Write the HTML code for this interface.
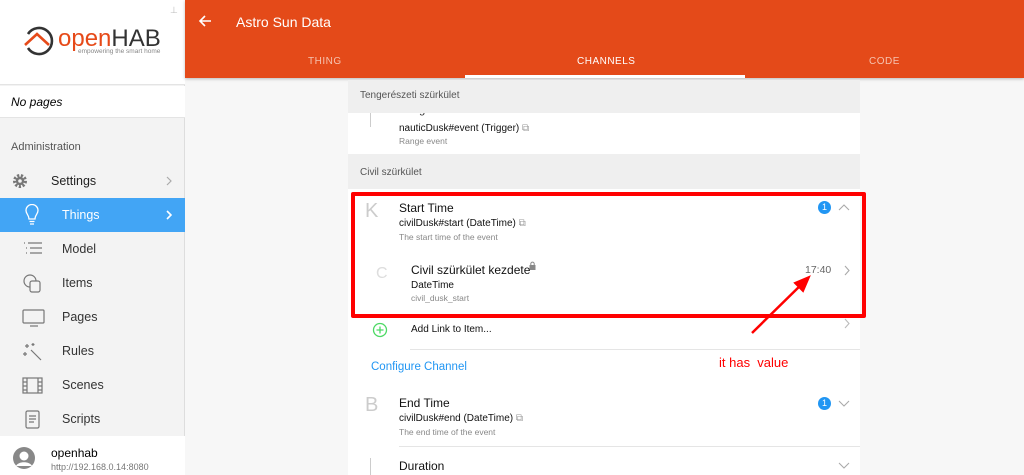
<!DOCTYPE html>
<html><head><meta charset="utf-8"><style>
*{margin:0;padding:0;box-sizing:border-box}
body{width:1024px;height:475px;overflow:hidden;position:relative;font-family:"Liberation Sans",Helvetica,Arial,sans-serif;background:#f7f7f7;color:#000}
.a{position:absolute;white-space:nowrap}
#side{position:absolute;left:0;top:0;width:185px;height:475px;background:#f3f3f3;border-right:1px solid #ddd}
.nav{position:absolute;left:0;width:185px;height:34px;font-size:12.5px;color:#333}
.nav span{position:absolute;left:62px;top:10px}
.ico{position:absolute;left:22px;top:8px}
.chev{position:absolute}
</style></head><body>
<div id="side">
 <div class="a" style="left:0;top:0;width:185px;height:85px;background:#fff;border-bottom:1px solid #e4e4e4"></div>
 <svg class="a" style="left:22px;top:26px" width="36" height="30" viewBox="0 0 36 30"><path d="M6 22 A13 13 0 1 0 6 8" fill="none" stroke="#333" stroke-width="2.6"/><path d="M3 19 L15 8 L27 19" fill="none" stroke="#e64a19" stroke-width="2.6"/></svg>
 <div class="a" style="left:58px;top:25px;font-size:24px;color:#e64a19">open<span style="color:#333">HAB</span></div>
 <div class="a" style="left:78px;top:48px;font-size:6.5px;color:#888">empowering the smart home</div>
 <div class="a" style="left:170px;top:5px;font-size:9px;color:#bbb">⊥</div>
 <div class="a" style="left:0;top:86px;width:185px;height:32px;background:#fff;border-bottom:1px solid #e4e4e4"></div>
 <div class="a" style="left:11px;top:95px;font-size:12px;font-style:italic;color:#000">No pages</div>
 <div class="a" style="left:11px;top:141px;font-size:11px;color:#555">Administration</div>
 <div class="nav" style="top:164px"><svg class="ico" style="left:12px;top:9px" width="16" height="16" viewBox="0 0 16 16"><circle cx="8" cy="8" r="5.5" fill="none" stroke="#777" stroke-width="3" stroke-dasharray="2.2 1.6"/><circle cx="8" cy="8" r="4.2" fill="#777"/><circle cx="8" cy="8" r="1.8" fill="#f3f3f3"/></svg><span style="left:51px;color:#222">Settings</span><svg class="chev" style="left:166px;top:12px" width="6" height="10"><path d="M1 1l4 4-4 4" fill="none" stroke="#aaa" stroke-width="1.2"/></svg></div>
 <div class="nav" style="top:198px;background:#42a5f5;color:#fff"><svg class="ico" style="left:25px;top:6px" width="14" height="22" viewBox="0 0 14 22"><path d="M4 15 C4 11 1 10 1 6.5 A6 6 0 0 1 13 6.5 C13 10 10 11 10 15 Z M4.5 17.5h5 M5 20h4" fill="none" stroke="#fff" stroke-width="1.3"/></svg><span style="color:#fff">Things</span><svg class="chev" style="left:166px;top:12px" width="6" height="10"><path d="M1 1l4 4-4 4" fill="none" stroke="#fff" stroke-width="1.6"/></svg></div>
 <div class="nav" style="top:232px"><svg class="ico" width="22" height="16"><path d="M2 3h1M6 3h14M4 8h1M8 8h12M4 13h1M8 13h12" stroke="#777" stroke-width="1.2"/></svg><span>Model</span></div>
 <div class="nav" style="top:266px"><svg class="ico" width="22" height="20"><circle cx="8" cy="7" r="6" fill="none" stroke="#777" stroke-width="1.2"/><rect x="8" y="7" width="10" height="11" rx="2" fill="#f3f3f3" stroke="#777" stroke-width="1.2"/></svg><span>Items</span></div>
 <div class="nav" style="top:300px"><svg class="ico" width="24" height="20"><rect x="1" y="2" width="21" height="13" rx="1" fill="none" stroke="#777" stroke-width="1.2"/><path d="M8 18h8" stroke="#777" stroke-width="1.2"/></svg><span>Pages</span></div>
 <div class="nav" style="top:334px"><svg class="ico" width="22" height="20"><path d="M9 8l10 10M5 2v4M3 4h4M11 1v3M9.5 2.5h3M3 10v4M1 12h4" stroke="#777" stroke-width="1.2"/></svg><span>Rules</span></div>
 <div class="nav" style="top:368px"><svg class="ico" width="22" height="20"><rect x="1" y="2" width="19" height="15" fill="none" stroke="#777" stroke-width="1.2"/><path d="M5 2v15M16 2v15M1 6h4M1 10h4M1 14h4M16 6h4M16 10h4M16 14h4" stroke="#777" stroke-width="1.2"/></svg><span>Scenes</span></div>
 <div class="nav" style="top:402px"><svg class="ico" style="left:25px" width="16" height="20"><rect x="1" y="1" width="13" height="17" rx="1.5" fill="none" stroke="#777" stroke-width="1.2"/><path d="M4 6h7M4 9h7M4 12h5" stroke="#777" stroke-width="1.2"/></svg><span>Scripts</span></div>
 <div class="a" style="left:0;top:436px;width:185px;height:39px;background:#fff"></div>
 <svg class="a" style="left:12px;top:446px" width="24" height="24"><circle cx="12" cy="12" r="11" fill="#888"/><circle cx="12" cy="10" r="4.5" fill="#fff"/><path d="M4 20c2-5 14-5 16 0" fill="#fff"/></svg>
 <div class="a" style="left:51px;top:446px;font-size:12px;color:#000">openhab</div>
 <div class="a" style="left:51px;top:462px;font-size:9px;color:#777">http://192.168.0.14:8080</div>
</div>
<div class="a" style="left:185px;top:0;width:839px;height:78px;background:#e44a19;box-shadow:0 1px 3px rgba(0,0,0,.25)"></div>
<svg class="a" style="left:198px;top:14px" width="14" height="14"><path d="M13 7H2M7 2L2 7l5 5" fill="none" stroke="#fff" stroke-width="1.6"/></svg>
<div class="a" style="left:236px;top:14px;font-size:14px;color:#fff">Astro Sun Data</div>
<div class="a" style="left:308px;top:56px;font-size:10px;color:#f5c3b0;letter-spacing:.5px">THING</div>
<div class="a" style="left:577px;top:56px;font-size:10px;color:#fff;letter-spacing:.5px">CHANNELS</div>
<div class="a" style="left:869px;top:56px;font-size:10px;color:#f5c3b0;letter-spacing:.5px">CODE</div>
<div class="a" style="left:465px;top:75px;width:280px;height:3px;background:#fff"></div>

<div class="a" style="left:348px;top:80px;width:512px;height:395px;background:#fff"></div>
<div class="a" style="left:348px;top:80px;width:512px;height:33px;background:#efefef"></div>
<div class="a" style="left:360px;top:90px;font-size:10px;color:#555">Tengerészeti szürkület</div>
<div class="a" style="left:370px;top:113px;width:1px;height:14px;background:#ccc"></div>
<div class="a" style="left:399px;top:104px;font-size:11px;color:#333;clip-path:inset(9px 0 0 0)">Range Event</div>
<div class="a" style="left:399px;top:123px;font-size:10px;color:#111">nauticDusk#event (Trigger) <span style="color:#999">⧉</span></div>
<div class="a" style="left:399px;top:136px;font-size:8.5px;color:#888">Range event</div>
<div class="a" style="left:348px;top:154px;width:512px;height:35px;background:#efefef"></div>
<div class="a" style="left:360px;top:167px;font-size:10px;color:#555">Civil szürkület</div>

<div class="a" style="left:365px;top:200px;font-size:20px;color:#ccc;font-weight:300">K</div>
<div class="a" style="left:399px;top:201px;font-size:12px;color:#111">Start Time</div>
<div class="a" style="left:399px;top:218px;font-size:10px;color:#111">civilDusk#start (DateTime) <span style="color:#999">⧉</span></div>
<div class="a" style="left:399px;top:232px;font-size:8.5px;color:#888">The start time of the event</div>
<div class="a" style="left:818px;top:201px;width:13px;height:13px;border-radius:50%;background:#2196f3;color:#fff;font-size:9px;text-align:center;line-height:13px">1</div>
<svg class="chev" style="left:838px;top:204px" width="12" height="7"><path d="M1 6l5-5 5 5" fill="none" stroke="#aaa" stroke-width="1.1"/></svg>
<div class="a" style="left:376px;top:265px;font-size:16px;color:#ddd">C</div>
<div class="a" style="left:411px;top:263px;font-size:12px;color:#111">Civil szürkület kezdete</div>
<svg class="a" style="left:529px;top:261px" width="7" height="9"><rect x="0.5" y="4" width="6" height="5" fill="#888"/><path d="M1.8 4V2.8a1.7 1.7 0 0 1 3.4 0V4" fill="none" stroke="#888" stroke-width="1"/></svg>
<div class="a" style="left:411px;top:280px;font-size:10px;color:#111">DateTime</div>
<div class="a" style="left:411px;top:293px;font-size:8.5px;color:#888">civil_dusk_start</div>
<div class="a" style="left:805px;top:264px;font-size:10.5px;color:#666">17:40</div>
<svg class="chev" style="left:844px;top:265px" width="6" height="11"><path d="M1 1l4 4.5-4 4.5" fill="none" stroke="#aaa" stroke-width="1.1"/></svg>

<svg class="a" style="left:372px;top:322px" width="16" height="16"><circle cx="8" cy="8" r="6.5" fill="none" stroke="#4cd964" stroke-width="1.3"/><path d="M8 4.5v7M4.5 8h7" stroke="#4cd964" stroke-width="1.3"/></svg>
<div class="a" style="left:411px;top:324px;font-size:10px;color:#111">Add Link to Item...</div>
<svg class="chev" style="left:844px;top:318px" width="6" height="11"><path d="M1 1l4 4.5-4 4.5" fill="none" stroke="#bbb" stroke-width="1.1"/></svg>
<div class="a" style="left:410px;top:349px;width:450px;height:1px;background:#e5e5e5"></div>
<div class="a" style="left:371px;top:361px;font-size:11.5px;color:#2196f3">Configure Channel</div>

<div class="a" style="left:365px;top:394px;font-size:20px;color:#ccc;font-weight:300">B</div>
<div class="a" style="left:399px;top:396px;font-size:12px;color:#111">End Time</div>
<div class="a" style="left:399px;top:413px;font-size:10px;color:#111">civilDusk#end (DateTime) <span style="color:#999">⧉</span></div>
<div class="a" style="left:399px;top:427px;font-size:8.5px;color:#888">The end time of the event</div>
<div class="a" style="left:818px;top:397px;width:13px;height:13px;border-radius:50%;background:#2196f3;color:#fff;font-size:9px;text-align:center;line-height:13px">1</div>
<svg class="chev" style="left:838px;top:400px" width="12" height="7"><path d="M1 1l5 5 5-5" fill="none" stroke="#aaa" stroke-width="1.1"/></svg>
<div class="a" style="left:399px;top:446px;width:461px;height:1px;background:#e5e5e5"></div>
<div class="a" style="left:370px;top:458px;width:1px;height:17px;background:#ccc"></div>
<div class="a" style="left:399px;top:459px;font-size:12px;color:#111">Duration</div>
<svg class="chev" style="left:838px;top:462px" width="12" height="7"><path d="M1 1l5 5 5-5" fill="none" stroke="#aaa" stroke-width="1.1"/></svg>

<div class="a" style="left:351px;top:192px;width:515px;height:126px;border:4px solid #f00;border-radius:2px"></div>
<svg class="a" style="left:740px;top:270px" width="80" height="70"><path d="M12 63 L66 10" stroke="#f00" stroke-width="2.5"/><path d="M69 7 L55 13 L63 21 Z" fill="#f00" stroke="#f00" stroke-width="2"/></svg>
<div class="a" style="left:719px;top:355px;font-size:13px;color:#f00">it has&nbsp; value</div>
</body></html>
